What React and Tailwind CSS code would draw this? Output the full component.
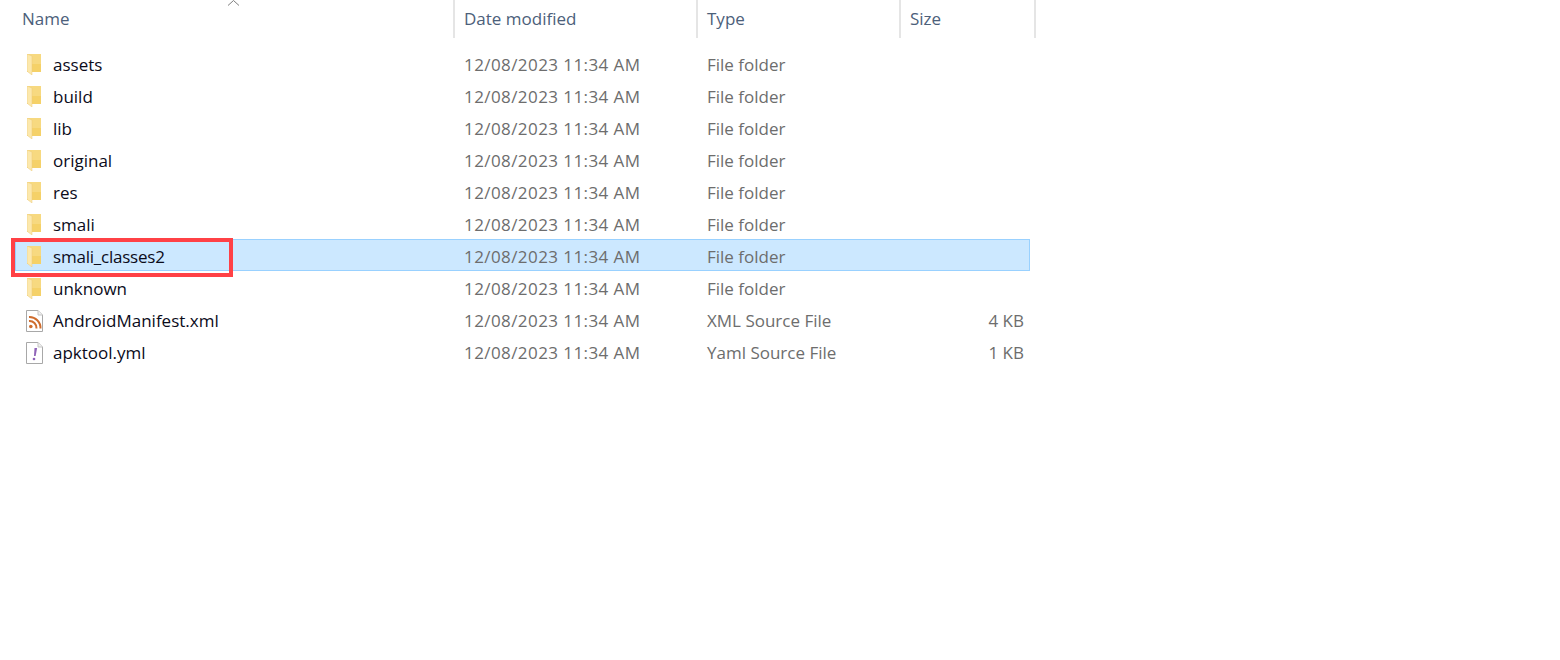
import { useState } from "react";

const files = [
  { name: "assets", type: "File folder", size: "", icon: "folder" },
  { name: "build", type: "File folder", size: "", icon: "folder" },
  { name: "lib", type: "File folder", size: "", icon: "folder" },
  { name: "original", type: "File folder", size: "", icon: "folder" },
  { name: "res", type: "File folder", size: "", icon: "folder" },
  { name: "smali", type: "File folder", size: "", icon: "folder" },
  { name: "smali_classes2", type: "File folder", size: "", icon: "folder", selected: true },
  { name: "unknown", type: "File folder", size: "", icon: "folder" },
  { name: "AndroidManifest.xml", type: "XML Source File", size: "4 KB", icon: "xml" },
  { name: "apktool.yml", type: "Yaml Source File", size: "1 KB", icon: "yml" },
];

const FolderIcon = () => (
  <svg width="14" height="21" viewBox="0 0 14 21">
    <path d="M0 0h14v18H0z" fill="#f7d980" />
    <path d="M5 10h9v8H5z" fill="#f5d168" />
    <path d="M0 0l5 2v19l-4-3-1-1z" fill="#fce8ac" stroke="#ecca78" strokeWidth="0.5" />
  </svg>
);

const DocIcon = ({ children }) => (
  <svg width="17" height="22" viewBox="0 0 17 22">
    <path d="M0.5 0.5H12L16.5 5V21.5H0.5Z" fill="#fff" stroke="#a8a8a8" />
    <path d="M12 0.5V5H16.5" fill="#f0f0f0" stroke="#c4c4c4" />
    {children}
  </svg>
);

const FileIcon = ({ kind }) => {
  if (kind === "folder") return <FolderIcon />;
  if (kind === "xml") {
    return (
      <DocIcon>
        <circle cx="4.8" cy="16.5" r="1.8" fill="#cf6d2e" />
        <path d="M3 11a7 7 0 0 1 7.500 7.500" fill="none" stroke="#cf6d2e" strokeWidth="2" />
        <path d="M3 7a11 11 0 0 1 11.500 11.500" fill="none" stroke="#cf6d2e" strokeWidth="2" />
      </DocIcon>
    );
  }
  return (
    <DocIcon>
      <path d="M8.500 6h2.600L9.600 14H8z" fill="#8f63b8" />
      <circle cx="8" cy="17" r="1.300" fill="#8f63b8" />
    </DocIcon>
  );
};

const App = () => {
  const [rows] = useState(files);

  return (
    <div className="relative h-[660px] w-[1560px] overflow-hidden bg-white font-['Open_Sans',sans-serif] text-[17px]">
      {/* Header */}
      <div className="flex h-[38px] w-[1036px] text-[#4c607a]">
        <div className="w-[455px] border-r-2 border-[#e5e5e5] pl-[22px] pt-[6px]">Name</div>
        <div className="w-[243px] border-r-2 border-[#e5e5e5] pl-[9px] pt-[6px]">Date modified</div>
        <div className="w-[203px] border-r-2 border-[#e5e5e5] pl-[9px] pt-[6px]">Type</div>
        <div className="w-[135px] border-r-2 border-[#e5e5e5] pl-[9px] pt-[6px]">Size</div>
      </div>

      {/* Sort arrow */}
      <svg className="absolute left-[227px] top-0" width="13" height="6" viewBox="0 0 13 6">
        <path d="M1 5.500L6.500 0.500L12 5.500" fill="none" stroke="#7d7d7d" />
      </svg>

      {/* File rows */}
      <div className="ml-[15px] mt-[9px] flex w-[1015px] flex-col">
        {rows.map((file) => (
          <div
            key={file.name}
            className={`flex h-8 items-center border pt-[3px] ${
              file.selected ? "border-[#99d1ff] bg-[#cce8ff]" : "border-transparent"
            }`}
          >
            <div className="flex w-[448px] items-center">
              <span className={`flex w-[37px] ${file.icon === "folder" ? "pl-[11px]" : "pl-[10px]"}`}>
                <FileIcon kind={file.icon} />
              </span>
              <span className={`text-[#0b0b1a] ${file.selected ? "tracking-[-0.22px]" : ""}`}>{file.name}</span>
            </div>
            <div className="w-[243px] tracking-[0.42px] text-[#6d6d6d]">12/08/2023 11:34 AM</div>
            <div className="w-[203px] text-[#6d6d6d]">{file.type}</div>
            <div className="w-[114px] text-right text-[#6d6d6d]">{file.size}</div>
          </div>
        ))}
      </div>

      {/* Red highlight */}
      <div className="absolute left-[11px] top-[238px] h-[39px] w-[222px] border-4 border-[#ff4146]" />
    </div>
  );
};

export default App;
